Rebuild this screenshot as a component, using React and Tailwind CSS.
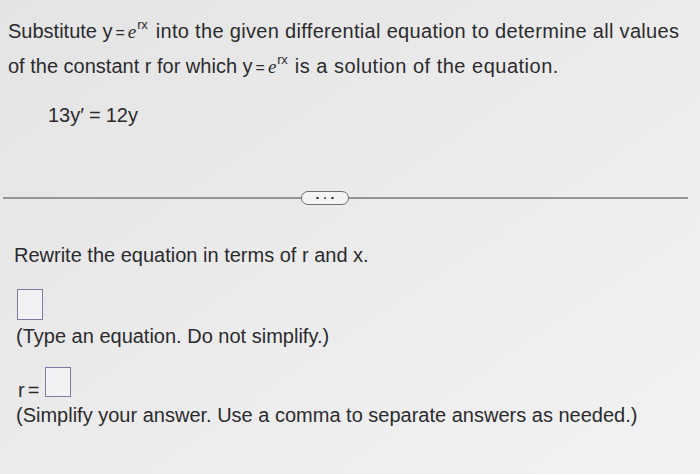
import React from "react";

// Eingabefeld (leeres Antwortkästchen)
const AnswerBox = ({ className = "" }) => (
  <div className={`border-[1.5px] border-[#7c7ca6] bg-[#f2f2f4] ${className}`} />
);

// y = e^{rx} mit kursivem e
const YErx = () => (
  <span>
    y
    <span className="mx-[3px] text-[16px] leading-none">=</span>
    <span className="italic font-['Liberation_Serif',serif] text-[19px] leading-none">e</span>
    <span className="relative -top-[9px] ml-[1px] text-[13px] leading-none tracking-[-0.5px]">rx</span>
  </span>
);

const App = () => {
  return (
    <div className="min-h-[474px] w-full bg-gradient-to-br from-[#e4e4e4] via-[#ebebeb] to-[#f2f2f2] text-[#2b2b2e] font-['Liberation_Sans',Arial,sans-serif] text-[20px]">
      {/* Aufgabenstellung */}
      <p className="pt-[14px] pl-[8px] pr-[4px] leading-[35px] whitespace-nowrap">
        Substitute <YErx />{" "}
        <span className="ml-[3px] tracking-[0.32px]">into the given differential equation to determine all values</span>
        <br />
        of the constant r for which <YErx />{" "}
        <span className="ml-[2px] tracking-[0.5px]">is a solution of the equation.</span>
      </p>

      <p className="mt-[19px] pl-[48px] leading-[24px]">
        13y′<span className="mx-[5px]">=</span>12y
      </p>

      {/* Trennlinie mit Pill-Button */}
      <div className="mt-[64px] ml-[3px] w-[685px] h-[14px] flex items-center">
        <div className="w-[298px] h-[2px] bg-[#959595]" />
        <div className="w-[48px] h-[14px] rounded-full border-[1.5px] border-[#6e6e6e] bg-[#f4f4f4] flex items-center justify-center gap-[5px]">
          <span className="w-[2.5px] h-[2.5px] rounded-full bg-[#3f3f3f]" />
          <span className="w-[2.5px] h-[2.5px] rounded-full bg-[#3f3f3f]" />
          <span className="w-[2.5px] h-[2.5px] rounded-full bg-[#3f3f3f]" />
        </div>
        <div className="flex-1 h-[2px] bg-[#959595]" />
      </div>

      {/* Antwortteil */}
      <p className="mt-[38px] pl-[14px] leading-[24px]">Rewrite the equation in terms of r and x.</p>

      <AnswerBox className="mt-[22px] ml-[17px] w-[26px] h-[31px]" />

      <p className="mt-[4px] pl-[16px] leading-[24px]">(Type an equation. Do not simplify.)</p>

      <div className="mt-[19px] pl-[18px] flex items-baseline leading-[24px]">
        <span>r</span>
        <span className="ml-[3px] mr-[6px]">=</span>
        <AnswerBox className="w-[26px] h-[30px]" />
      </div>

      <p className="mt-[1px] pl-[16px] leading-[24px]">
        (Simplify your answer. Use a comma to separate answers as needed.)
      </p>
    </div>
  );
};

export default App;
